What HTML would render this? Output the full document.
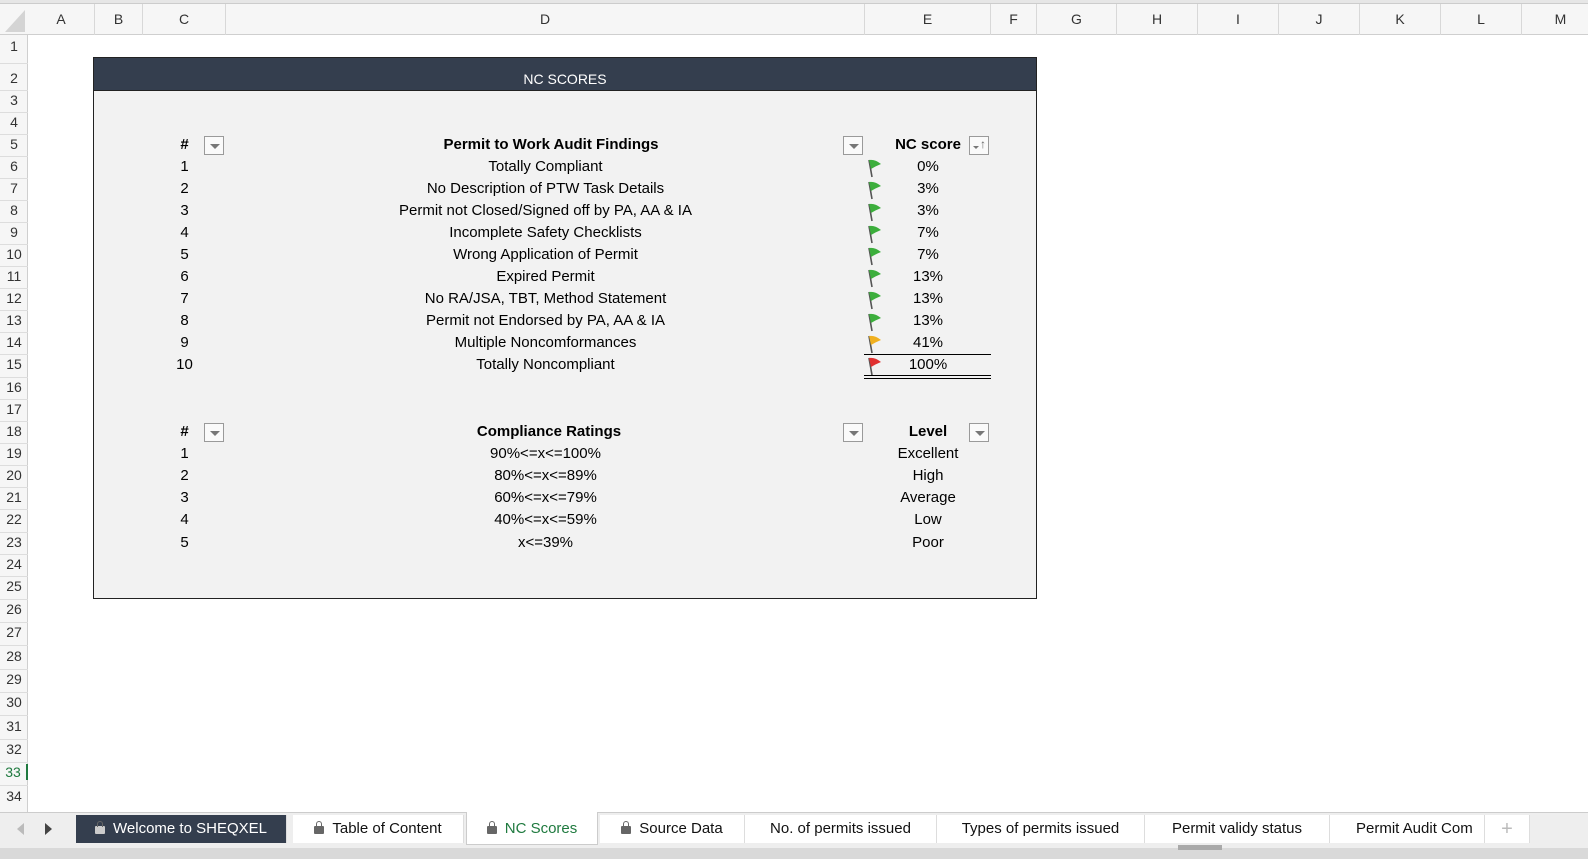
<!DOCTYPE html>
<html><head><meta charset="utf-8"><style>
*{margin:0;padding:0;box-sizing:border-box}
body{width:1588px;height:859px;overflow:hidden;background:#fff;position:relative;font-family:"Liberation Sans",sans-serif;color:#000}
.a{position:absolute}
.ch{position:absolute;top:4px;height:31px;line-height:31px;text-align:center;font-size:14px;color:#333;border-right:1px solid #d8d8d8}
.rh{position:absolute;left:0;width:28px;text-align:center;font-size:14px;color:#333}
.t{position:absolute;font-size:15px;text-align:center;white-space:nowrap}
.dd{position:absolute;width:20px;height:19px;border:1px solid #9a9a9a;background:#fafafa}
.dd:after{content:"";position:absolute;left:5px;top:7px;border-left:5px solid transparent;border-right:5px solid transparent;border-top:5px solid #777}
.dd.s:after{left:3px;top:9px;border-left:3px solid transparent;border-right:3px solid transparent;border-top:3px solid #777}
.tab{position:absolute;top:815px;height:28px;line-height:28px;font-size:15px;text-align:center;background:#fff;color:#111;border-right:1px solid #ddd}
.lk{display:inline-block;width:10px;height:8px;background:#666;border-radius:1px;position:relative;margin-right:8px;vertical-align:-1px}
.lk:before{content:"";position:absolute;left:2px;top:-5px;width:6px;height:6px;border:1.5px solid #666;border-bottom:none;border-radius:3px 3px 0 0;box-sizing:border-box}
</style></head><body>
<div class="a" style="left:0;top:0;width:1588px;height:4px;background:#e6e6e6;border-bottom:1px solid #ccc"></div>
<div class="a" style="left:0;top:4px;width:1588px;height:31px;background:#f6f6f6;border-bottom:1px solid #cfcfcf"></div>
<div class="a" style="left:0;top:35px;width:28px;height:777px;background:#f6f6f6;border-right:1px solid #cfcfcf"></div>
<svg class="a" style="left:3px;top:8px" width="24" height="24"><polygon points="22,2 22,24 2,24" fill="#d4d4d4"/></svg>
<div id="cols"></div><div id="rows"></div>
<div class="a" style="left:93px;top:57px;width:944px;height:542px;background:#f2f2f2;border:1.5px solid #222"></div>
<div class="a" style="left:93px;top:57px;width:944px;height:34px;background:#343e4e;border:1.5px solid #222;color:#fff;font-size:14px;text-align:center;line-height:42px">NC SCORES</div>
<div id="body"></div>
<div class="a" style="left:864px;top:354px;width:127px;height:1px;background:#000"></div>
<div class="a" style="left:864px;top:375px;width:127px;height:1px;background:#000"></div>
<div class="a" style="left:864px;top:378px;width:127px;height:1px;background:#000"></div>
<div class="a" style="left:0;top:812px;width:1588px;height:36px;background:#eeeeee;border-top:1px solid #ccc"></div>
<div class="a" style="left:0;top:848px;width:1588px;height:11px;background:#d9d9d9"></div>
<div class="a" style="left:1178px;top:845px;width:44px;height:5px;background:#aaa"></div>
<svg class="a" style="left:12px;top:821px" width="50" height="16"><polygon points="12,2 12,14 5,8" fill="#bbb"/><polygon points="33,2 33,14 40,8" fill="#444"/></svg>
<div class="tab" style="left:76px;width:211px;background:#343e4e;color:#fff"><span class="lk" style="background:#ccc"></span>Welcome to SHEQXEL</div>
<div class="tab" style="left:293px;width:171px"><span class="lk"></span>Table of Content</div>
<div class="tab" style="left:466px;width:132px;top:812px;height:33px;line-height:33px;color:#1f7a3f;border:1px solid #ccc;border-top:none"><span class="lk"></span>NC Scores</div>
<div class="tab" style="left:600px;width:145px"><span class="lk"></span>Source Data</div>
<div class="tab" style="left:745px;width:192px">No. of permits issued</div>
<div class="tab" style="left:937px;width:208px">Types of permits issued</div>
<div class="tab" style="left:1145px;width:185px">Permit validy status</div>
<div class="tab" style="left:1330px;width:155px;text-align:left;padding-left:26px;overflow:hidden">Permit Audit Com</div>
<div class="tab" style="left:1485px;width:45px;color:#bbb;font-size:20px">+</div>
<script>
var cols=[["A",28,95],["B",95,143],["C",143,226],["D",226,865],["E",865,991],["F",991,1037],["G",1037,1117],["H",1117,1198],["I",1198,1279],["J",1279,1360],["K",1360,1441],["L",1441,1522],["M",1522,1600]];
var h="";cols.forEach(c=>{h+='<div class="ch" style="left:'+c[1]+'px;width:'+(c[2]-c[1])+'px">'+c[0]+'</div>'});
document.getElementById("cols").innerHTML=h;
var rc={1:47,2:79,3:101,4:123};for(var n=5;n<=15;n++)rc[n]=145+22*(n-5);
var more=[388,410,432,454,476,498,520,543,565,587,610,633,657,680,703,727,750,773,797];for(var i=0;i<more.length;i++)rc[16+i]=more[i];
h="";for(n=1;n<=34;n++){h+='<div class="rh" style="top:'+(rc[n]-9)+'px;'+(n==33?'color:#1f7a3f;border-right:2px solid #1f7a3f':'')+'">'+n+'</div>';
if(n<34)h+='<div class="a" style="left:0;width:28px;height:1px;background:#ddd;top:'+Math.round((rc[n]+rc[n+1])/2)+'px"></div>';}
document.getElementById("rows").innerHTML=h;
function t(x,w,y,s,b){return '<div class="t" style="left:'+x+'px;width:'+w+'px;top:'+(y-9)+'px;'+(b?'font-weight:bold;':'')+'">'+s+'</div>'}
var items=["Totally Compliant","No Description of PTW Task Details","Permit not Closed/Signed off by PA, AA &amp; IA","Incomplete Safety Checklists","Wrong Application of Permit","Expired Permit","No RA/JSA, TBT, Method Statement","Permit not Endorsed by PA, AA &amp; IA","Multiple Noncomformances","Totally Noncompliant"];
var sc=["0%","3%","3%","7%","7%","13%","13%","13%","41%","100%"];
h=t(143,83,145,"#",1)+t(226,650,145,"Permit to Work Audit Findings",1)+t(865,126,145,"NC score",1);
h+='<div class="dd" style="left:204px;top:136px"></div><div class="dd" style="left:843px;top:136px"></div><div class="dd s" style="left:969px;top:136px"><span style="position:absolute;left:10px;top:0;font-size:12px;color:#666">&#8593;</span></div>';
for(i=0;i<10;i++){var y=rc[6+i];h+=t(143,83,y,i+1)+t(226,639,y,items[i])+t(865,126,y,sc[i]);
var col=i<8?"#3cae3c":i==8?"#f0b020":"#e03030";
h+='<svg class="a" style="left:866px;top:'+(y-9)+'px" width="18" height="20"><line x1="3" y1="2" x2="6" y2="19" stroke="#555" stroke-width="1.6"/><path d="M3 2 Q9 1 15 6 Q10 8 5 11 Z" fill="'+col+'"/></svg>';}
h+=t(143,83,432,"#",1)+t(226,646,432,"Compliance Ratings",1)+t(865,126,432,"Level",1);
h+='<div class="dd" style="left:204px;top:423px"></div><div class="dd" style="left:843px;top:423px"></div><div class="dd" style="left:969px;top:423px"></div>';
var cr=["90%&lt;=x&lt;=100%","80%&lt;=x&lt;=89%","60%&lt;=x&lt;=79%","40%&lt;=x&lt;=59%","x&lt;=39%"],lv=["Excellent","High","Average","Low","Poor"];
for(i=0;i<5;i++){y=rc[19+i];h+=t(143,83,y,i+1)+t(226,639,y,cr[i])+t(865,126,y,lv[i]);}
document.getElementById("body").innerHTML=h;
</script>
</body></html>
